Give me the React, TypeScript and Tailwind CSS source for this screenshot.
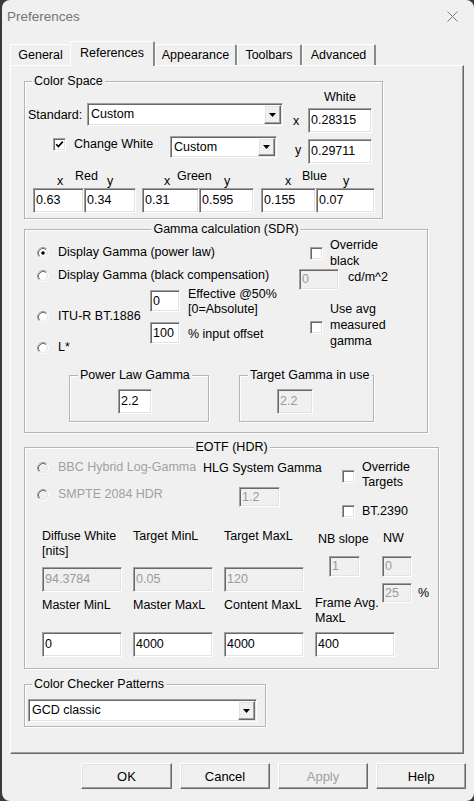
import type { ReactNode } from 'react'

const sunken =
  'border border-t-[#a0a0a0] border-l-[#a0a0a0] border-r-white border-b-white shadow-[inset_1px_1px_0_#696969,inset_-1px_-1px_0_#e3e3e3]'
const raised =
  'border border-t-white border-l-white border-r-[#696969] border-b-[#696969] shadow-[inset_-1px_-1px_0_#a0a0a0,inset_1px_1px_0_#e3e3e3]'
const etched = 'border border-[#b4b4b4] shadow-[inset_1px_1px_0_#fff,1px_1px_0_#fff]'

function Edit({ value, disabled, className = '' }: { value: string; disabled?: boolean; className?: string }) {
  return (
    <div
      className={`${sunken} flex shrink-0 items-center whitespace-nowrap pl-[2px] ${
        disabled ? 'bg-[#f0f0f0] text-[#9a9a9a]' : 'bg-white text-black'
      } ${className}`}
    >
      {value}
    </div>
  )
}

function Combo({ value, className = '' }: { value: string; className?: string }) {
  return (
    <div className={`${sunken} flex shrink-0 items-stretch bg-white p-[1px] ${className}`}>
      <span className="flex flex-1 items-center whitespace-nowrap pl-[2px]">{value}</span>
      <span className={`${raised} flex w-[17px] items-center justify-center bg-[#f0f0f0]`}>
        <svg width="7" height="4" viewBox="0 0 7 4">
          <path d="M0 0h7L3.5 4z" fill="#000" />
        </svg>
      </span>
    </div>
  )
}

function Check({ checked, className = '' }: { checked?: boolean; className?: string }) {
  return (
    <span className={`${sunken} flex h-[13px] w-[13px] shrink-0 items-center justify-center bg-white ${className}`}>
      {checked && (
        <svg width="9" height="9" viewBox="0 0 9 9">
          <path d="M1.2 4.2 L3.4 6.6 L7.8 1.6" stroke="#000" strokeWidth="1.7" fill="none" />
        </svg>
      )}
    </span>
  )
}

function Radio({ checked, disabled, className = '' }: { checked?: boolean; disabled?: boolean; className?: string }) {
  return (
    <svg width="12" height="12" viewBox="0 0 12 12" className={`shrink-0 ${className}`}>
      <circle cx="6" cy="6" r="4.6" fill={disabled ? '#f0f0f0' : '#fff'} />
      <path d="M9.89 2.11A5.5 5.5 0 0 0 2.11 9.89" stroke="#a0a0a0" fill="none" />
      <path d="M9.18 2.82A4.5 4.5 0 0 0 2.82 9.18" stroke="#696969" fill="none" />
      <path d="M2.11 9.89A5.5 5.5 0 0 0 9.89 2.11" stroke="#fff" fill="none" />
      <path d="M2.82 9.18A4.5 4.5 0 0 0 9.18 2.82" stroke="#e3e3e3" fill="none" />
      {checked && <circle cx="6" cy="6" r="1.8" fill="#000" />}
    </svg>
  )
}

function Group({
  legend,
  center,
  legendClass = 'left-[7px]',
  className = '',
  children,
}: {
  legend: string
  center?: boolean
  legendClass?: string
  className?: string
  children?: ReactNode
}) {
  return (
    <div className={`relative shrink-0 ${etched} ${className}`}>
      <span
        className={`absolute -top-[8px] whitespace-nowrap bg-[#f0f0f0] px-[2px] ${
          center ? 'left-1/2 -translate-x-1/2' : legendClass
        }`}
      >
        {legend}
      </span>
      {children}
    </div>
  )
}

function Tab({ label, selected, className = '' }: { label: string; selected?: boolean; className?: string }) {
  return (
    <div
      className={`flex shrink-0 items-center justify-center whitespace-nowrap rounded-t-[2px] border-t border-l border-t-white border-l-white bg-[#f0f0f0] ${
        selected ? 'relative z-10 -mb-px h-[25px] pb-[2px]' : 'h-[21px]'
      } ${className}`}
    >
      {label}
    </div>
  )
}

function Btn({ label, disabled, className = '' }: { label: string; disabled?: boolean; className?: string }) {
  return (
    <button
      type="button"
      className={`${raised} flex h-[26px] items-center justify-center bg-[#f0f0f0] text-[13px] ${
        disabled ? 'text-[#a0a0a0]' : 'text-black'
      } ${className}`}
    >
      {label}
    </button>
  )
}

export default function App() {
  return (
    <div className="h-[801px] w-[474px] overflow-hidden bg-[#3a3a3a] font-['Liberation_Sans',Arial,sans-serif] text-[12.5px] leading-[15px] text-black">
      <div className="ml-[2px] flex h-[801px] w-[472px] flex-col rounded-[8px] bg-[#f0f0f0]">
        {/* title bar */}
        <div className="flex h-[32px] shrink-0 items-center justify-between pl-[5px] pr-[16px]">
          <span className="text-[13.5px] text-[#747474]">Preferences</span>
          <svg width="11" height="11" viewBox="0 0 11 11">
            <path d="M0.5 0.5l10 10M10.5 0.5l-10 10" stroke="#7a7a7a" strokeWidth="1" />
          </svg>
        </div>

        {/* tabs */}
        <div className="flex h-[33px] shrink-0 items-end pl-[8px]">
          <Tab label="General" className="w-[60px]" />
          <Tab label="References" selected className="w-[85px] border-r-2 border-r-[#8a8a8a]" />
          <Tab label="Appearance" className="w-[82px] border-r-2 border-r-[#8a8a8a]" />
          <Tab label="Toolbars" className="w-[65px] border-r-2 border-r-[#8a8a8a]" />
          <Tab label="Advanced" className="w-[74px] border-r-2 border-r-[#8a8a8a]" />
        </div>

        {/* tab page */}
        <div className="ml-[8px] flex h-[689px] w-[454px] shrink-0 flex-col items-start border border-t-white border-l-white border-r-[#696969] border-b-[#696969] pl-[13px] pt-[15px] shadow-[inset_-1px_-1px_0_#a0a0a0]">
          {/* Color Space */}
          <Group legend="Color Space" className="h-[138px] w-[359px]">
            <div className="flex h-[54px] items-start">
              <span className="ml-[3px] mt-[26px] w-[59px] whitespace-nowrap">Standard:</span>
              <Combo value="Custom" className="mt-[21px] h-[23px] w-[196px]" />
              <span className="mt-[32px] w-[25px] pl-[10px]">x</span>
              <div className="flex w-[64px] flex-col items-center">
                <span className="mt-[8px]">White</span>
                <Edit value="0.28315" className="mt-[3px] h-[25px] w-[64px]" />
              </div>
            </div>
            <div className="flex h-[31px] items-start">
              <Check checked className="ml-[28px] mt-[2px]" />
              <span className="ml-[8px] mt-[1px] w-[96px] whitespace-nowrap">Change White</span>
              <Combo value="Custom" className="h-[22px] w-[107px]" />
              <span className="mt-[7px] w-[31px] pl-[18px]">y</span>
              <Edit value="0.29711" className="mt-[3px] h-[25px] w-[64px]" />
            </div>
            <div className="flex h-[21px] items-start pl-[8px]">
              <div className="flex w-[103px] items-start">
                <span className="ml-[24px] mt-[7px] w-[18px]">x</span>
                <span className="mt-[2px] w-[32px]">Red</span>
                <span className="mt-[7px]">y</span>
              </div>
              <div className="ml-[6px] flex w-[112px] items-start">
                <span className="ml-[22px] mt-[7px] w-[13px]">x</span>
                <span className="mt-[2px] w-[47px]">Green</span>
                <span className="mt-[7px]">y</span>
              </div>
              <div className="ml-[7px] flex w-[114px] items-start">
                <span className="ml-[24px] mt-[7px] w-[17px]">x</span>
                <span className="mt-[2px] w-[41px]">Blue</span>
                <span className="mt-[7px]">y</span>
              </div>
            </div>
            <div className="flex pl-[8px]">
              <Edit value="0.63" className="h-[25px] w-[51px]" />
              <Edit value="0.34" className="h-[25px] w-[52px]" />
              <Edit value="0.31" className="ml-[6px] h-[25px] w-[57px]" />
              <Edit value="0.595" className="h-[25px] w-[55px]" />
              <Edit value="0.155" className="ml-[7px] h-[25px] w-[55px]" />
              <Edit value="0.07" className="h-[25px] w-[59px]" />
            </div>
          </Group>

          {/* Gamma calculation */}
          <Group legend="Gamma calculation (SDR)" center className="mt-[10px] h-[204px] w-[404px]">
            <div className="flex h-[145px] items-start">
              <div className="flex w-[274px] flex-col items-start whitespace-nowrap pt-[15px]">
                <div className="flex items-center">
                  <Radio checked className="ml-[12px]" />
                  <span className="ml-[9px]">Display Gamma (power law)</span>
                </div>
                <div className="mt-[8px] flex items-center">
                  <Radio className="ml-[12px]" />
                  <span className="ml-[9px]">Display Gamma (black compensation)</span>
                </div>
                <div className="mt-[4px] flex items-start">
                  <Radio className="ml-[12px] mt-[24px]" />
                  <span className="ml-[9px] mt-[22px] w-[92px]">ITU-R BT.1886</span>
                  <div className="flex flex-col">
                    <Edit value="0" className="mt-[3px] h-[22px] w-[30px]" />
                    <Edit value="100" className="mt-[10px] h-[22px] w-[30px]" />
                  </div>
                  <div className="ml-[8px] flex flex-col">
                    <span>Effective @50%</span>
                    <span>[0=Absolute]</span>
                    <span className="mt-[10px]">% input offset</span>
                  </div>
                </div>
                <div className="-mt-[4px] flex items-center">
                  <Radio className="ml-[12px]" />
                  <span className="ml-[9px]">L*</span>
                </div>
              </div>
              <div className="flex flex-col items-start whitespace-nowrap">
                <div className="flex items-start">
                  <Check className="ml-[11px] mt-[17px]" />
                  <span className="ml-[7px] mt-[7px] leading-[16px]">
                    Override
                    <br />
                    black
                  </span>
                </div>
                <div className="flex items-start">
                  <Edit value="0" disabled className="h-[21px] w-[40px]" />
                  <span className="ml-[9px] mt-[1px]">cd/m^2</span>
                </div>
                <div className="flex items-start">
                  <Check className="ml-[11px] mt-[31px]" />
                  <span className="ml-[7px] mt-[11px] leading-[16px]">
                    Use avg
                    <br />
                    measured
                    <br />
                    gamma
                  </span>
                </div>
              </div>
            </div>
            <div className="flex">
              <Group legend="Power Law Gamma" legendClass="left-[8px]" className="ml-[44px] h-[47px] w-[140px]">
                <Edit value="2.2" className="ml-[48px] mt-[13px] h-[25px] w-[34px]" />
              </Group>
              <Group legend="Target Gamma in use" legendClass="left-[8px]" className="ml-[30px] h-[47px] w-[135px]">
                <Edit value="2.2" disabled className="ml-[37px] mt-[13px] h-[25px] w-[36px]" />
              </Group>
            </div>
          </Group>

          {/* EOTF */}
          <Group legend="EOTF (HDR)" center className="mt-[14px] h-[222px] w-[415px]">
            <div className="flex h-[81px] items-start whitespace-nowrap">
              <div className="flex w-[178px] flex-col pt-[12px] text-[#a0a0a0]">
                <div className="flex items-center">
                  <Radio disabled className="ml-[12px]" />
                  <span className="ml-[9px]">BBC Hybrid Log-Gamma</span>
                </div>
                <div className="mt-[12px] flex items-center">
                  <Radio disabled className="ml-[12px]" />
                  <span className="ml-[9px]">SMPTE 2084 HDR</span>
                </div>
              </div>
              <div className="flex w-[139px] flex-col items-start pt-[13px]">
                <span>HLG System Gamma</span>
                <Edit value="1.2" disabled className="ml-[36px] mt-[11px] h-[20px] w-[41px]" />
              </div>
              <div className="flex flex-col items-start">
                <div className="flex items-start">
                  <Check className="mt-[22px]" />
                  <span className="ml-[7px] mt-[12px]">
                    Override
                    <br />
                    Targets
                  </span>
                </div>
                <div className="mt-[14px] flex items-center">
                  <Check />
                  <span className="ml-[7px]">BT.2390</span>
                </div>
              </div>
            </div>

            <div className="flex h-[69px] items-start whitespace-nowrap pl-[17px]">
              <div className="flex w-[91px] flex-col items-start">
                <span className="h-[38px]">
                  Diffuse White
                  <br />
                  [nits]
                </span>
                <Edit value="94.3784" disabled className="h-[25px] w-[80px]" />
              </div>
              <div className="flex w-[91px] flex-col items-start">
                <span className="h-[38px]">Target MinL</span>
                <Edit value="0.05" disabled className="h-[25px] w-[80px]" />
              </div>
              <div className="flex w-[91px] flex-col items-start">
                <span className="h-[38px]">Target MaxL</span>
                <Edit value="120" disabled className="h-[25px] w-[80px]" />
              </div>
              <div className="flex w-[67px] flex-col items-start">
                <span className="ml-[3px] mt-[3px]">NB slope</span>
                <Edit value="1" disabled className="ml-[14px] mt-[9px] h-[21px] w-[31px]" />
              </div>
              <div className="flex flex-col items-start">
                <span className="ml-[1px] mt-[2px]">NW</span>
                <Edit value="0" disabled className="mt-[10px] h-[21px] w-[30px]" />
                <div className="mt-[6px] flex items-center">
                  <Edit value="25" disabled className="h-[20px] w-[30px]" />
                  <span className="ml-[6px]">%</span>
                </div>
              </div>
            </div>

            <div className="flex items-start whitespace-nowrap pl-[17px]">
              <div className="flex w-[91px] flex-col items-start">
                <span className="h-[34px]">Master MinL</span>
                <Edit value="0" className="h-[25px] w-[80px]" />
              </div>
              <div className="flex w-[91px] flex-col items-start">
                <span className="h-[34px]">Master MaxL</span>
                <Edit value="4000" className="h-[25px] w-[80px]" />
              </div>
              <div className="flex w-[91px] flex-col items-start">
                <span className="h-[34px]">Content MaxL</span>
                <Edit value="4000" className="h-[25px] w-[80px]" />
              </div>
              <div className="flex flex-col items-start">
                <span className="-mt-[2px] h-[36px]">
                  Frame Avg.
                  <br />
                  MaxL
                </span>
                <Edit value="400" className="h-[25px] w-[80px]" />
              </div>
            </div>
          </Group>

          {/* Color Checker */}
          <Group legend="Color Checker Patterns" className="mt-[15px] h-[43px] w-[242px]">
            <Combo value="GCD classic" className="ml-[3px] mt-[14px] h-[23px] w-[229px]" />
          </Group>
        </div>

        {/* buttons */}
        <div className="flex shrink-0 gap-[8px] pl-[79px] pt-[9px]">
          <Btn label="OK" className="w-[91px]" />
          <Btn label="Cancel" className="w-[90px]" />
          <Btn label="Apply" disabled className="w-[90px]" />
          <Btn label="Help" className="w-[90px]" />
        </div>
      </div>
    </div>
  )
}
